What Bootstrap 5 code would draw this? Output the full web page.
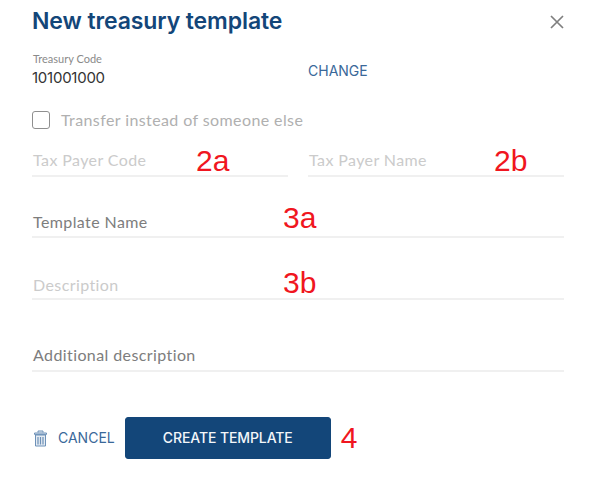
<!DOCTYPE html>
<html lang="en">
<head>
<meta charset="utf-8">
<title>New treasury template</title>
<link rel="stylesheet" href="https://cdn.jsdelivr.net/npm/bootstrap@5.3.0/dist/css/bootstrap.min.css">
<style>
html,body{background:#fff;overflow:hidden}
body{font-family:"Lato","Liberation Sans",sans-serif;color:#333;width:600px;height:481px}
.sheet{padding:7px 36px 0 32px}
.head-row{height:28px;margin-bottom:17px}
.sheet-title{font-family:"Inter",sans-serif;font-size:23px;font-weight:600;line-height:28px;color:#134679;margin:0;letter-spacing:-.1px}
.close-x{width:16px;height:16px;margin-right:-1px;margin-top:1px;padding:0;border:0;background:none;display:block;align-self:flex-start}
.code-row{height:37px;margin-bottom:22px}
.code-col{width:276px;padding-left:1px}
.code-label{font-size:11px;line-height:14px;color:#8a8a8a}
.code-value{font-family:"Inter",sans-serif;font-size:15px;line-height:22px;margin-top:1px;margin-left:-1px;color:#333;letter-spacing:-.25px}
.text-link{font-family:"Inter",sans-serif;font-size:14px;color:#3a6899;text-decoration:none;line-height:18px;margin-bottom:9px}
.check-row{height:18px;margin-bottom:20px}
input.check-box[type=checkbox]{width:18px;height:18px;border:1.5px solid #8f8f8f;border-radius:3px;margin:0 11px 0 0;background:#fff}
.check-text{font-size:16px;line-height:18px;color:#b0b0b0;letter-spacing:.4px}
.fields-two{gap:20px}
.uline{position:relative;border-bottom:2px solid #f0f0f0;font-size:16px;letter-spacing:.4px;line-height:22px}
.field-text{padding-left:1px;display:block}
.ph-light{color:#cbcbcb}
.ph-dark{color:#7d7d7d}
.f1{flex:1 1 0;height:28px}
.f2{height:61px;padding-top:34px}
.f3{height:62px;padding-top:36px}
.f4{height:72px;padding-top:44px}
.note{position:absolute;color:#f01620;font-family:"Liberation Sans",sans-serif;font-size:30px;line-height:30px;letter-spacing:0}
.n2a{left:164px;top:-3px}
.n2b{left:186px;top:-3px}
.n3a{left:251px;top:26px}
.n3b{left:251px;top:30px}
.foot-row{margin-top:45px;height:42px}
.cancel-link{font-family:"Inter",sans-serif;font-size:14px;color:#3a6899;text-decoration:none;margin-right:10px;gap:10px;line-height:18px;padding-left:1px}
.create-btn{width:206px;height:42px;padding:0;background:#134679;border:1px solid #134679;border-radius:3px;color:#f3f6f9;font-family:"Inter",sans-serif;font-size:14px;font-weight:500;letter-spacing:-.1px;line-height:40px;--bs-btn-hover-bg:#134679;--bs-btn-hover-color:#fff}
.note-4{margin-left:10px;color:#f01620;font-family:"Liberation Sans",sans-serif;font-size:30px;line-height:42px}
</style>
</head>
<body>
<div class="sheet">
  <div class="head-row d-flex justify-content-between align-items-center">
    <h1 class="sheet-title">New treasury template</h1>
    <button class="close-x" type="button" aria-label="Close">
      <svg width="16" height="16" viewBox="0 0 16 16"><path d="M2 2 14 14M14 2 2 14" stroke="#7f7f7f" stroke-width="1.7" fill="none"/></svg>
    </button>
  </div>
  <div class="code-row d-flex align-items-end">
    <div class="code-col">
      <div class="code-label">Treasury Code</div>
      <div class="code-value">101001000</div>
    </div>
    <a class="text-link" href="#">CHANGE</a>
  </div>
  <label class="check-row d-flex align-items-center">
    <input class="check-box form-check-input" type="checkbox">
    <span class="check-text">Transfer instead of someone else</span>
  </label>
  <div class="fields-two d-flex">
    <div class="uline f1 ph-light"><span class="field-text">Tax Payer Code</span><span class="note n2a">2a</span></div>
    <div class="uline f1 ph-light"><span class="field-text">Tax Payer Name</span><span class="note n2b">2b</span></div>
  </div>
  <div class="uline f2 ph-dark"><span class="field-text">Template Name</span><span class="note n3a">3a</span></div>
  <div class="uline f3 ph-light"><span class="field-text">Description</span><span class="note n3b">3b</span></div>
  <div class="uline f4 ph-dark"><span class="field-text">Additional description</span></div>
  <div class="foot-row d-flex align-items-center">
    <a class="cancel-link d-flex align-items-center" href="#">
      <svg width="15" height="17" viewBox="0 0 15 17"><path d="M5 2.500V1h5v1.500M1.500 3h12v1.400h-12zM2.500 5h10v11h-10z" fill="#e6ecf3" stroke="#6d91b8" stroke-width="1"/><path d="M5 7v7.500M7.500 7v7.500M10 7v7.500" stroke="#6d91b8" stroke-width="1.200"/></svg>
      CANCEL
    </a>
    <button class="btn create-btn" type="button">CREATE TEMPLATE</button>
    <span class="note-4">4</span>
  </div>
</div>
<script src="https://cdn.jsdelivr.net/npm/bootstrap@5.3.0/dist/js/bootstrap.bundle.min.js"></script>
</body>
</html>
